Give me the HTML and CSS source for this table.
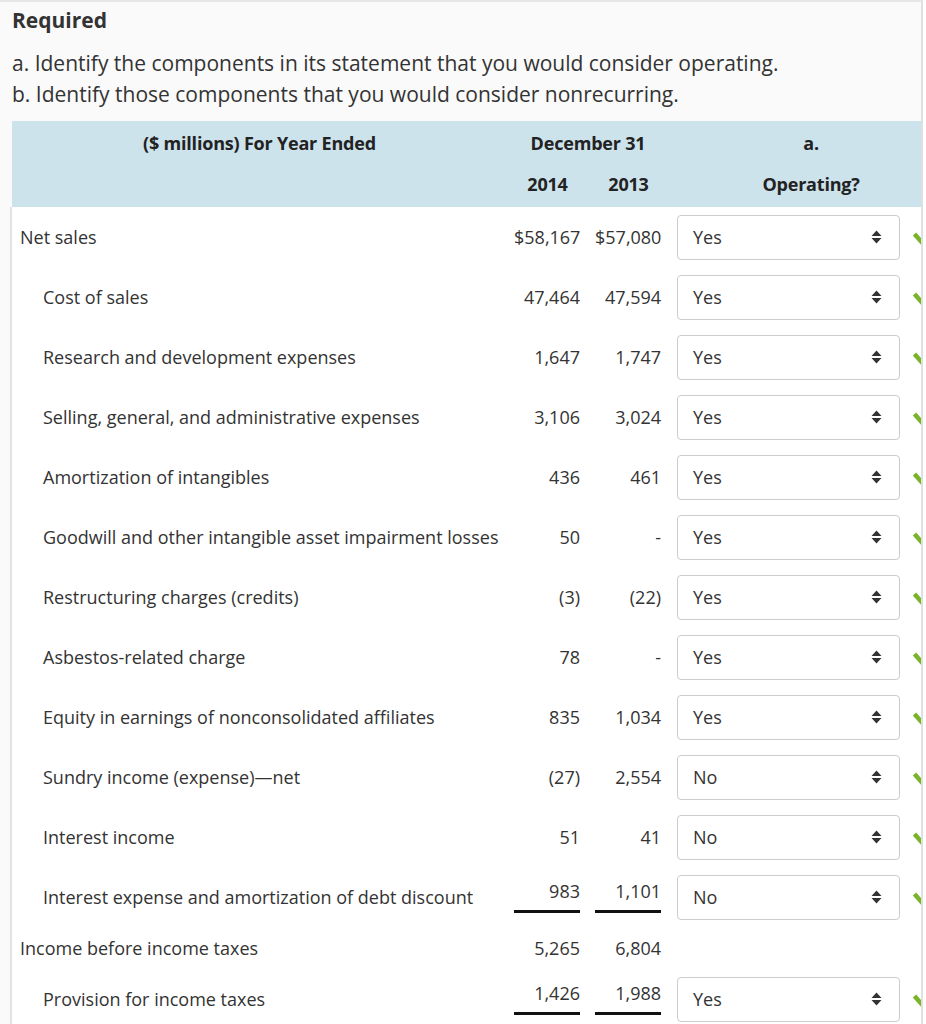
FILE: index.html
```html
<!DOCTYPE html>
<html>
<head>
<meta charset="utf-8">
<link rel="stylesheet" href="styles.css">
</head>
<body>
<div class="page">
  <h2 class="title">Required</h2>
  <p class="task">a. Identify the components in its statement that you would consider operating.</p>
  <p class="task">b. Identify those components that you would consider nonrecurring.</p>
  <div class="table-wrap">
    <table class="stmt">
      <colgroup>
        <col class="c-label"><col class="c-num"><col class="c-num"><col class="c-sel"><col class="c-chk">
      </colgroup>
      <thead>
        <tr>
          <th class="h-first">($ millions) For Year Ended</th>
          <th colspan="2">December 31</th>
          <th colspan="2">a.</th>
        </tr>
        <tr class="h-second">
          <th class="h-first"></th>
          <th>2014</th>
          <th>2013</th>
          <th colspan="2">Operating?</th>
        </tr>
      </thead>
      <tbody>
        <tr>
          <td class="label">Net sales</td>
          <td class="num"><div class="n">$58,167</div></td>
          <td class="num"><div class="n">$57,080</div></td>
          <td class="sel"><div class="select"><span>Yes</span><svg class="arr" width="11" height="14" viewBox="0 0 11 14"><path d="M0.5 6 L5.5 0.5 L10.5 6 Z M0.5 8 L10.5 8 L5.5 13.5 Z" fill="#333"/></svg></div></td>
          <td class="chk"><svg class="tick" width="26" height="20" viewBox="0 0 26 20"><polyline points="1.5,3 10,12.5 24,-3" fill="none" stroke="#79b42a" stroke-width="4.5"/></svg></td>
        </tr>
        <tr>
          <td class="label ind">Cost of sales</td>
          <td class="num"><div class="n">47,464</div></td>
          <td class="num"><div class="n">47,594</div></td>
          <td class="sel"><div class="select"><span>Yes</span><svg class="arr" width="11" height="14" viewBox="0 0 11 14"><path d="M0.5 6 L5.5 0.5 L10.5 6 Z M0.5 8 L10.5 8 L5.5 13.5 Z" fill="#333"/></svg></div></td>
          <td class="chk"><svg class="tick" width="26" height="20" viewBox="0 0 26 20"><polyline points="1.5,3 10,12.5 24,-3" fill="none" stroke="#79b42a" stroke-width="4.5"/></svg></td>
        </tr>
        <tr>
          <td class="label ind">Research and development expenses</td>
          <td class="num"><div class="n">1,647</div></td>
          <td class="num"><div class="n">1,747</div></td>
          <td class="sel"><div class="select"><span>Yes</span><svg class="arr" width="11" height="14" viewBox="0 0 11 14"><path d="M0.5 6 L5.5 0.5 L10.5 6 Z M0.5 8 L10.5 8 L5.5 13.5 Z" fill="#333"/></svg></div></td>
          <td class="chk"><svg class="tick" width="26" height="20" viewBox="0 0 26 20"><polyline points="1.5,3 10,12.5 24,-3" fill="none" stroke="#79b42a" stroke-width="4.5"/></svg></td>
        </tr>
        <tr>
          <td class="label ind">Selling, general, and administrative expenses</td>
          <td class="num"><div class="n">3,106</div></td>
          <td class="num"><div class="n">3,024</div></td>
          <td class="sel"><div class="select"><span>Yes</span><svg class="arr" width="11" height="14" viewBox="0 0 11 14"><path d="M0.5 6 L5.5 0.5 L10.5 6 Z M0.5 8 L10.5 8 L5.5 13.5 Z" fill="#333"/></svg></div></td>
          <td class="chk"><svg class="tick" width="26" height="20" viewBox="0 0 26 20"><polyline points="1.5,3 10,12.5 24,-3" fill="none" stroke="#79b42a" stroke-width="4.5"/></svg></td>
        </tr>
        <tr>
          <td class="label ind">Amortization of intangibles</td>
          <td class="num"><div class="n">436</div></td>
          <td class="num"><div class="n">461</div></td>
          <td class="sel"><div class="select"><span>Yes</span><svg class="arr" width="11" height="14" viewBox="0 0 11 14"><path d="M0.5 6 L5.5 0.5 L10.5 6 Z M0.5 8 L10.5 8 L5.5 13.5 Z" fill="#333"/></svg></div></td>
          <td class="chk"><svg class="tick" width="26" height="20" viewBox="0 0 26 20"><polyline points="1.5,3 10,12.5 24,-3" fill="none" stroke="#79b42a" stroke-width="4.5"/></svg></td>
        </tr>
        <tr>
          <td class="label ind">Goodwill and other intangible asset impairment losses</td>
          <td class="num"><div class="n">50</div></td>
          <td class="num"><div class="n">-</div></td>
          <td class="sel"><div class="select"><span>Yes</span><svg class="arr" width="11" height="14" viewBox="0 0 11 14"><path d="M0.5 6 L5.5 0.5 L10.5 6 Z M0.5 8 L10.5 8 L5.5 13.5 Z" fill="#333"/></svg></div></td>
          <td class="chk"><svg class="tick" width="26" height="20" viewBox="0 0 26 20"><polyline points="1.5,3 10,12.5 24,-3" fill="none" stroke="#79b42a" stroke-width="4.5"/></svg></td>
        </tr>
        <tr>
          <td class="label ind">Restructuring charges (credits)</td>
          <td class="num"><div class="n">(3)</div></td>
          <td class="num"><div class="n">(22)</div></td>
          <td class="sel"><div class="select"><span>Yes</span><svg class="arr" width="11" height="14" viewBox="0 0 11 14"><path d="M0.5 6 L5.5 0.5 L10.5 6 Z M0.5 8 L10.5 8 L5.5 13.5 Z" fill="#333"/></svg></div></td>
          <td class="chk"><svg class="tick" width="26" height="20" viewBox="0 0 26 20"><polyline points="1.5,3 10,12.5 24,-3" fill="none" stroke="#79b42a" stroke-width="4.5"/></svg></td>
        </tr>
        <tr>
          <td class="label ind">Asbestos-related charge</td>
          <td class="num"><div class="n">78</div></td>
          <td class="num"><div class="n">-</div></td>
          <td class="sel"><div class="select"><span>Yes</span><svg class="arr" width="11" height="14" viewBox="0 0 11 14"><path d="M0.5 6 L5.5 0.5 L10.5 6 Z M0.5 8 L10.5 8 L5.5 13.5 Z" fill="#333"/></svg></div></td>
          <td class="chk"><svg class="tick" width="26" height="20" viewBox="0 0 26 20"><polyline points="1.5,3 10,12.5 24,-3" fill="none" stroke="#79b42a" stroke-width="4.5"/></svg></td>
        </tr>
        <tr>
          <td class="label ind">Equity in earnings of nonconsolidated affiliates</td>
          <td class="num"><div class="n">835</div></td>
          <td class="num"><div class="n">1,034</div></td>
          <td class="sel"><div class="select"><span>Yes</span><svg class="arr" width="11" height="14" viewBox="0 0 11 14"><path d="M0.5 6 L5.5 0.5 L10.5 6 Z M0.5 8 L10.5 8 L5.5 13.5 Z" fill="#333"/></svg></div></td>
          <td class="chk"><svg class="tick" width="26" height="20" viewBox="0 0 26 20"><polyline points="1.5,3 10,12.5 24,-3" fill="none" stroke="#79b42a" stroke-width="4.5"/></svg></td>
        </tr>
        <tr>
          <td class="label ind">Sundry income (expense)—net</td>
          <td class="num"><div class="n">(27)</div></td>
          <td class="num"><div class="n">2,554</div></td>
          <td class="sel"><div class="select"><span>No</span><svg class="arr" width="11" height="14" viewBox="0 0 11 14"><path d="M0.5 6 L5.5 0.5 L10.5 6 Z M0.5 8 L10.5 8 L5.5 13.5 Z" fill="#333"/></svg></div></td>
          <td class="chk"><svg class="tick" width="26" height="20" viewBox="0 0 26 20"><polyline points="1.5,3 10,12.5 24,-3" fill="none" stroke="#79b42a" stroke-width="4.5"/></svg></td>
        </tr>
        <tr>
          <td class="label ind">Interest income</td>
          <td class="num"><div class="n">51</div></td>
          <td class="num"><div class="n">41</div></td>
          <td class="sel"><div class="select"><span>No</span><svg class="arr" width="11" height="14" viewBox="0 0 11 14"><path d="M0.5 6 L5.5 0.5 L10.5 6 Z M0.5 8 L10.5 8 L5.5 13.5 Z" fill="#333"/></svg></div></td>
          <td class="chk"><svg class="tick" width="26" height="20" viewBox="0 0 26 20"><polyline points="1.5,3 10,12.5 24,-3" fill="none" stroke="#79b42a" stroke-width="4.5"/></svg></td>
        </tr>
        <tr>
          <td class="label ind">Interest expense and amortization of debt discount</td>
          <td class="num"><div class="n under">983</div></td>
          <td class="num"><div class="n under">1,101</div></td>
          <td class="sel"><div class="select"><span>No</span><svg class="arr" width="11" height="14" viewBox="0 0 11 14"><path d="M0.5 6 L5.5 0.5 L10.5 6 Z M0.5 8 L10.5 8 L5.5 13.5 Z" fill="#333"/></svg></div></td>
          <td class="chk"><svg class="tick" width="26" height="20" viewBox="0 0 26 20"><polyline points="1.5,3 10,12.5 24,-3" fill="none" stroke="#79b42a" stroke-width="4.5"/></svg></td>
        </tr>
        <tr class="short">
          <td class="label">Income before income taxes</td>
          <td class="num"><div class="n">5,265</div></td>
          <td class="num"><div class="n">6,804</div></td>
          <td class="sel"></td>
          <td class="chk"></td>
        </tr>
        <tr>
          <td class="label ind">Provision for income taxes</td>
          <td class="num"><div class="n under">1,426</div></td>
          <td class="num"><div class="n under">1,988</div></td>
          <td class="sel"><div class="select"><span>Yes</span><svg class="arr" width="11" height="14" viewBox="0 0 11 14"><path d="M0.5 6 L5.5 0.5 L10.5 6 Z M0.5 8 L10.5 8 L5.5 13.5 Z" fill="#333"/></svg></div></td>
          <td class="chk"><svg class="tick" width="26" height="20" viewBox="0 0 26 20"><polyline points="1.5,3 10,12.5 24,-3" fill="none" stroke="#79b42a" stroke-width="4.5"/></svg></td>
        </tr>
      </tbody>
    </table>
  </div>
</div>
</body>
</html>
```

FILE: styles.css
```css
html, body {
  margin: 0;
  padding: 0;
  background: #ffffff;
}
body {
  font-family: "Open Sans", "Liberation Sans", sans-serif;
  color: #333333;
}
.page {
  width: 923px;
  min-height: 1024px;
  background: #fafafa;
  border-top: 2px solid #e6e6e6;
  border-right: 2px solid #e0e0e0;
  overflow: hidden;
  box-sizing: border-box;
}
.title {
  margin: 4px 0 0 12px;
  font-size: 21px;
  font-weight: 700;
  line-height: 28px;
  color: #333;
}
.task {
  margin: 0 0 0 12px;
  font-size: 21px;
  line-height: 31px;
  color: #333;
}
.title + .task {
  margin-top: 14px;
}
.table-wrap {
  margin-top: 11px;
  margin-left: 10px;
  width: 943px;
}
.stmt {
  table-layout: fixed;
  border-collapse: separate;
  border-spacing: 0;
  width: 943px;
}
.c-label { width: 497px; }
.c-num { width: 81px; }
.c-sel { width: 239px; }
.c-chk { width: 45px; }
.stmt th {
  background: #cde3ec;
  height: 43px;
  padding: 0;
  font-size: 18px;
  font-weight: 700;
  color: #222;
  text-align: center;
  vertical-align: middle;
  letter-spacing: -0.2px;
}
.stmt tr.h-second th {
  height: 40px;
  padding-bottom: 3px;
}
.stmt th.h-first {
  border-left: 2px solid #fafafa;
}
.stmt td {
  padding: 0;
  height: 60px;
  background: #ffffff;
  vertical-align: middle;
  font-size: 18px;
  color: #333;
}
.stmt tr.short td {
  height: 42px;
}
.stmt td.label {
  border-left: 2px solid #e3e3e3;
  padding-left: 8px;
  white-space: nowrap;
}
.stmt td.label.ind {
  padding-left: 31px;
}
.stmt td.num {
  text-align: right;
}
.n {
  margin: 0 8px 0 7px;
  line-height: 24px;
}
.n.under {
  padding-bottom: 7px;
  border-bottom: 3px solid #111;
  margin-top: -2px;
}
.select {
  margin: 0 8px;
  height: 45px;
  box-sizing: border-box;
  border: 1px solid #cccccc;
  border-radius: 4px;
  background: #fff;
  display: flex;
  align-items: center;
  justify-content: space-between;
  padding: 0 17px 0 15px;
  font-size: 18px;
  color: #333;
}
.arr {
  display: block;
}
.tick {
  display: block;
  margin: 8px 0 0 5px;
}
```
